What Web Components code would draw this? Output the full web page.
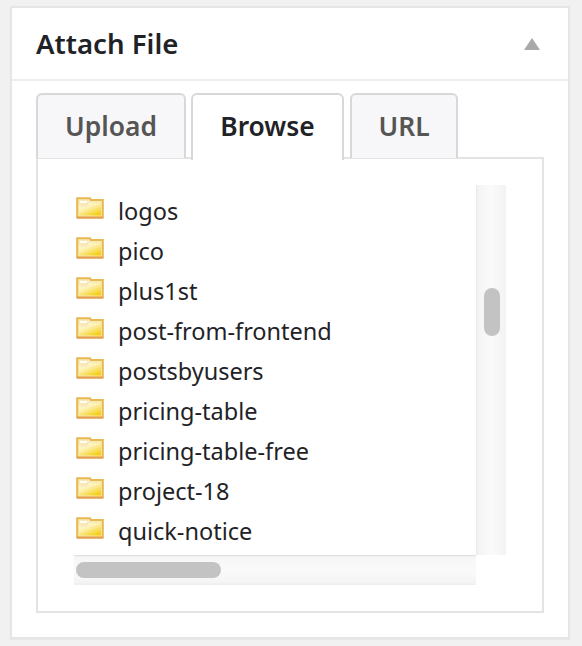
<!DOCTYPE html>
<html>
<head>
<meta charset="utf-8">
<style>
  html, body { margin: 0; padding: 0; background: #f1f1f1; }
  body { font-family: "Noto Sans", "Open Sans", sans-serif; color: #23282d; height: 646px; overflow: hidden; }
</style>
</head>
<body>
<attach-box heading="Attach File">
  <file-tabs>
    <tab-item style="width:150px">Upload</tab-item>
    <tab-item active style="width:153px">Browse</tab-item>
    <tab-item style="width:108px;margin-left:1px">URL</tab-item>
  </file-tabs>
  <file-panel>
    <folder-row>logos</folder-row>
    <folder-row>pico</folder-row>
    <folder-row>plus1st</folder-row>
    <folder-row>post-from-frontend</folder-row>
    <folder-row>postsbyusers</folder-row>
    <folder-row>pricing-table</folder-row>
    <folder-row>pricing-table-free</folder-row>
    <folder-row>project-18</folder-row>
    <folder-row>quick-notice</folder-row>
  </file-panel>
</attach-box>

<script>
class AttachBox extends HTMLElement {
  constructor() {
    super();
    this.shadowDOM = this.attachShadow({mode: 'open'});
  }

  connectedCallback() {
    this.shadowDOM.innerHTML = `
      <style>
        * { box-sizing: border-box; margin: 0; padding: 0; }
        :host {
          display: block;
          box-sizing: border-box;
          width: 560px;
          height: 633px;
          margin: 6px 0 0 10px;
          background: #fff;
          border: 2px solid #e5e5e5;
          box-shadow: 0 1px 1px rgba(0, 0, 0, .04);
        }
        header {
          display: flex;
          align-items: center;
          justify-content: space-between;
          height: 73px;
          padding: 0 28px 2px 24px;
          border-bottom: 2px solid #eee;
        }
        h2 {
          font-size: 27.6px;
          line-height: 36px;
          font-weight: 600;
          color: #1f2327;
        }
        .arrow {
          width: 0;
          height: 0;
          margin-top: 3px;
          border-left: 8px solid transparent;
          border-right: 8px solid transparent;
          border-bottom: 12px solid #a9a9a9;
        }
        .body { padding: 12px 24px 0; }
      </style>
      <header>
        <h2>${this.getAttribute('heading')}</h2>
        <span class="arrow"></span>
      </header>
      <div class="body"><slot></slot></div>
    `;
  }
}

class FileTabs extends HTMLElement {
  constructor() {
    super();
    this.shadowDOM = this.attachShadow({mode: 'open'});
  }

  connectedCallback() {
    this.shadowDOM.innerHTML = `
      <style>
        :host {
          display: flex;
          gap: 5px;
          height: 65px;
          position: relative;
          z-index: 1;
        }
      </style>
      <slot></slot>
    `;
  }
}

class TabItem extends HTMLElement {
  constructor() {
    super();
    this.shadowDOM = this.attachShadow({mode: 'open'});
  }

  connectedCallback() {
    this.shadowDOM.innerHTML = `
      <style>
        :host {
          display: block;
          box-sizing: border-box;
          height: 65px;
          background: #f7f7f9;
          border: 2px solid #d8d8d8;
          border-bottom: 0;
          border-radius: 6px 6px 0 0;
          font-size: 26.4px;
          font-weight: 600;
          line-height: 62px;
          text-align: center;
          color: #555;
        }
        :host([active]) {
          height: 67px;
          background: #fff;
          color: #1f2327;
        }
      </style>
      <slot></slot>
    `;
  }
}

class FilePanel extends HTMLElement {
  constructor() {
    super();
    this.shadowDOM = this.attachShadow({mode: 'open'});
  }

  connectedCallback() {
    this.shadowDOM.innerHTML = `
      <style>
        * { box-sizing: border-box; }
        :host {
          display: block;
          box-sizing: border-box;
          width: 508px;
          height: 456px;
          margin-top: -1px;
          border: 2px solid #e3e3e3;
          padding: 26px 0 0 36px;
        }
        .frame {
          display: grid;
          grid-template-columns: 402px 30px;
          grid-template-rows: 370px 30px;
        }
        .list {
          padding: 8px 0 0 2px;
          overflow: hidden;
        }
        .track-v {
          position: relative;
          background: linear-gradient(to right, #e8e8e8 0, #f4f4f4 2px, #fafafa 50%, #f3f3f3 100%);
        }
        .track-h {
          position: relative;
          background: linear-gradient(to bottom, #dcdcdc 0, #f6f6f6 2px, #fafafa 50%, #f5f5f5 90%, #eee 100%);
        }
        .thumb-v {
          position: absolute;
          left: 8px;
          top: 103px;
          width: 16px;
          height: 48px;
          border-radius: 8px;
          background: #c3c3c3;
        }
        .thumb-h {
          position: absolute;
          left: 2px;
          top: 7px;
          width: 145px;
          height: 16px;
          border-radius: 8px;
          background: #c3c3c3;
        }
      </style>
      <div class="frame">
        <div class="list"><slot></slot></div>
        <div class="track-v"><div class="thumb-v"></div></div>
        <div class="track-h"><div class="thumb-h"></div></div>
      </div>
    `;
  }
}

class FolderRow extends HTMLElement {
  constructor() {
    super();
    this.shadowDOM = this.attachShadow({mode: 'open'});
  }

  connectedCallback() {
    this.shadowDOM.innerHTML = `
      <style>
        :host {
          display: flex;
          align-items: flex-start;
          gap: 14px;
          height: 40px;
          font-size: 23.5px;
          line-height: 37px;
          color: #1f2327;
          white-space: nowrap;
        }
        svg { display: block; flex: none; margin-top: 4px; }
      </style>
      <svg width="28" height="22" viewBox="0 0 28 22">
        <defs>
          <linearGradient id="fill" x1="0.15" y1="0" x2="0.85" y2="1">
            <stop offset="0" stop-color="#fffbe8"/>
            <stop offset="0.4" stop-color="#fdf0ac"/>
            <stop offset="1" stop-color="#f3cb05"/>
          </linearGradient>
        </defs>
        <path d="M1.2 1.2 L14 1.2 L15 3 L26.8 3 L26.8 20.4 L1.2 20.4 Z" fill="#f9e9b8" stroke="#e7b84f" stroke-width="2"/>
        <rect x="4" y="4" width="7" height="2" fill="#fffdf2"/>
        <path d="M3 9.5 L11 9.5 L13 6 L25 6 L25 18.5 L3 18.5 Z" fill="url(#fill)"/>
        <path d="M1 20.6 L27 20.6" stroke="#e39a4e" stroke-width="1.8"/>
      </svg>
      <span><slot></slot></span>
    `;
  }
}

customElements.define('attach-box', AttachBox);
customElements.define('file-tabs', FileTabs);
customElements.define('tab-item', TabItem);
customElements.define('file-panel', FilePanel);
customElements.define('folder-row', FolderRow);
</script>
</body>
</html>
